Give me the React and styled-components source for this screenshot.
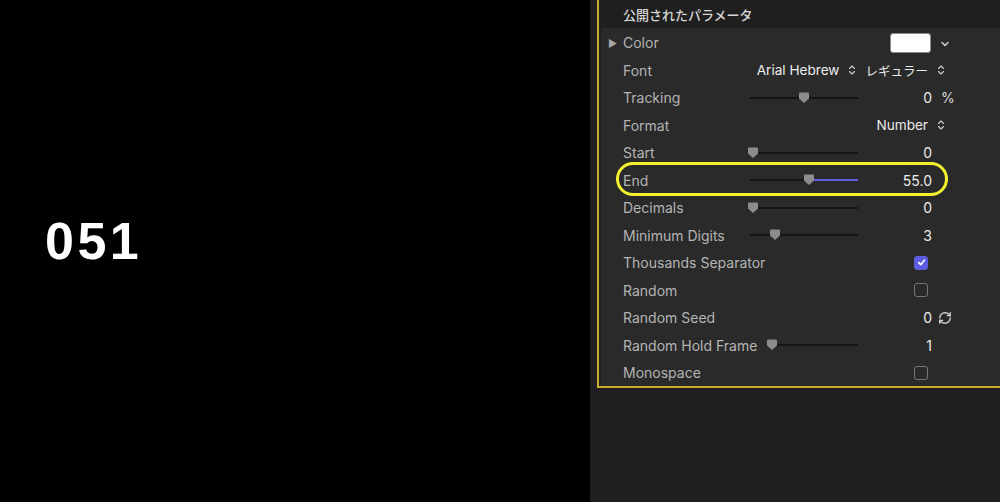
import React from "react";
import styled, { createGlobalStyle } from "styled-components";
import { ChevronDown, ChevronsUpDown, RefreshCw } from "lucide-react";

const GlobalStyle = createGlobalStyle`
  html, body {
    margin: 0;
    padding: 0;
    background: #000;
  }
  body {
    font-family: Inter, "Noto Sans CJK JP", "Liberation Sans", sans-serif;
    -webkit-font-smoothing: antialiased;
  }
`;

const Page = styled.div`
  display: flex;
  width: 1000px;
  height: 502px;
  overflow: hidden;
`;

const Viewer = styled.div`
  width: 590px;
  flex-shrink: 0;
  background: #000;
  display: flex;
  align-items: center;
  padding-left: 45px;
  box-sizing: border-box;
`;

const Counter = styled.div`
  font-family: "Liberation Sans", Arial, sans-serif;
  font-weight: 700;
  font-size: 52px;
  letter-spacing: 3.5px;
  color: #fff;
  margin-top: -20px;
`;

const Inspector = styled.div`
  flex: 1;
  background: #1f1f1f;
  display: flex;
  flex-direction: column;
  padding-left: 7px;
`;

const Frame = styled.div`
  border-left: 2px solid #c9ac2e;
  border-bottom: 2px solid #c9ac2e;
`;

const Header = styled.div`
  height: 28px;
  display: flex;
  align-items: center;
  padding-left: 24px;
  font-family: "Noto Sans CJK JP", sans-serif;
  font-size: 13px;
  font-weight: 500;
  color: #d6d6d6;
`;

const Body = styled.div`
  margin-left: 2px;
  background: #2a2a2a;
  border-top-left-radius: 4px;
`;

const Row = styled.div`
  position: relative;
  height: 27.5px;
  padding-top: 1.5px;
  box-sizing: border-box;
  display: flex;
  align-items: center;
  font-size: 14px;
`;

const Disclosure = styled.span`
  width: 22px;
  flex-shrink: 0;
  font-size: 10px;
  color: #a8a8a8;
  padding-left: 7px;
  box-sizing: border-box;
`;

const Label = styled.span`
  flex: 1;
  color: #b4b4b4;
  white-space: nowrap;
`;

const Track = styled.div`
  position: relative;
  width: ${(p) => p.$width}px;
  height: 2px;
  background: #151515;
`;

const Fill = styled.div`
  position: absolute;
  top: 0;
  right: 0;
  height: 2px;
  background: #5b5ce0;
`;

const Thumb = styled.svg`
  position: absolute;
  top: -5px;
  margin-left: -6px;
`;

const Value = styled.span`
  width: 74px;
  text-align: right;
  color: #ececec;
  display: flex;
  justify-content: flex-end;
  align-items: center;
`;

const Trailing = styled.span`
  width: 68px;
  flex-shrink: 0;
  display: flex;
  align-items: center;
  padding-left: ${(p) => p.$pad || 8}px;
  box-sizing: border-box;
  color: #d8d8d8;
`;

const Swatch = styled.div`
  width: 39px;
  height: 18px;
  background: #fff;
  border: 1px solid #8a8a8a;
  border-radius: 3px;
  margin-right: 1px;
`;

const Caret = styled.span`
  display: flex;
  margin-top: 3px;
`;

const Box = styled.div`
  width: 12px;
  height: 12px;
  border-radius: 3px;
  margin-right: 4px;
  display: flex;
  align-items: center;
  justify-content: center;
  border: 1.5px solid ${(p) => (p.$checked ? "#5b5ce0" : "#767676")};
  background: ${(p) => (p.$checked ? "#5b5ce0" : "transparent")};
`;

const Popups = styled.span`
  display: flex;
  align-items: center;
  gap: 7px;
  color: #ececec;
  font-size: 13.6px;
  margin-right: 53px;
`;

const PopupJa = styled.span`
  font-family: "Noto Sans CJK JP", sans-serif;
  font-size: 12.5px;
`;

function Slider({ pos, width = 108, fill = false }) {
  const x = (pos / 100) * width;
  return (
    <Track $width={width}>
      {fill && <Fill style={{ width: width - x }} />}
      <Thumb width="12" height="12" viewBox="0 0 12 12" style={{ left: x }}>
        <path d="M1 1.5 Q1 0.5 2 0.5 H10 Q11 0.5 11 1.5 V6.5 L6 11 L1 6.5 Z" fill="#8c8c8c" />
      </Thumb>
    </Track>
  );
}

function Check({ checked }) {
  return (
    <Box $checked={checked}>
      {checked && (
        <svg width="9" height="9" viewBox="0 0 10 10">
          <path d="M2 5.2 L4.2 7.4 L8.2 2.4" stroke="#fff" strokeWidth="1.8" fill="none" strokeLinecap="round" strokeLinejoin="round" />
        </svg>
      )}
    </Box>
  );
}

const upDown = <ChevronsUpDown size={12} strokeWidth={2.2} color="#cfcfcf" />;

const Highlight = styled.div`
  position: absolute;
  left: 15px;
  top: -4px;
  width: 326px;
  height: 28px;
  border: 3px solid #f4f22e;
  border-radius: 18px;
  pointer-events: none;
`;

export default function App() {
  return (
    <>
      <GlobalStyle />
      <Page>
        <Viewer>
          <Counter>051</Counter>
        </Viewer>
        <Inspector>
          <Frame>
            <Header>公開されたパラメータ</Header>
            <Body>
              <Row>
                <Disclosure>▶</Disclosure>
                <Label>Color</Label>
                <Value>
                  <Swatch />
                </Value>
                <Trailing $pad={7}>
                  <Caret>
                    <ChevronDown size={12} strokeWidth={3} color="#cfcfcf" />
                  </Caret>
                </Trailing>
              </Row>
              <Row>
                <Disclosure />
                <Label>Font</Label>
                <Popups>
                  <span>Arial Hebrew</span>
                  {upDown}
                  <PopupJa>レギュラー</PopupJa>
                  {upDown}
                </Popups>
              </Row>
              <Row>
                <Disclosure />
                <Label>Tracking</Label>
                <Slider pos={50} />
                <Value>0</Value>
                <Trailing $pad={9}>%</Trailing>
              </Row>
              <Row>
                <Disclosure />
                <Label>Format</Label>
                <Popups>
                  <span>Number</span>
                  {upDown}
                </Popups>
              </Row>
              <Row>
                <Disclosure />
                <Label>Start</Label>
                <Slider pos={3} />
                <Value>0</Value>
                <Trailing />
              </Row>
              <Row>
                <Disclosure />
                <Label>End</Label>
                <Slider pos={55} fill />
                <Value>55.0</Value>
                <Trailing />
                <Highlight />
              </Row>
              <Row>
                <Disclosure />
                <Label>Decimals</Label>
                <Slider pos={3} />
                <Value>0</Value>
                <Trailing />
              </Row>
              <Row>
                <Disclosure />
                <Label>Minimum Digits</Label>
                <Slider pos={23} />
                <Value>3</Value>
                <Trailing />
              </Row>
              <Row>
                <Disclosure />
                <Label>Thousands Separator</Label>
                <Value>
                  <Check checked />
                </Value>
                <Trailing />
              </Row>
              <Row>
                <Disclosure />
                <Label>Random</Label>
                <Value>
                  <Check />
                </Value>
                <Trailing />
              </Row>
              <Row>
                <Disclosure />
                <Label>Random Seed</Label>
                <Value>0</Value>
                <Trailing $pad={6}>
                  <RefreshCw size={14} strokeWidth={2.4} color="#d0d0d0" />
                </Trailing>
              </Row>
              <Row>
                <Disclosure />
                <Label>Random Hold Frame</Label>
                <Slider pos={6} width={91} />
                <Value>1</Value>
                <Trailing />
              </Row>
              <Row>
                <Disclosure />
                <Label>Monospace</Label>
                <Value>
                  <Check />
                </Value>
                <Trailing />
              </Row>
            </Body>
          </Frame>
        </Inspector>
      </Page>
    </>
  );
}
